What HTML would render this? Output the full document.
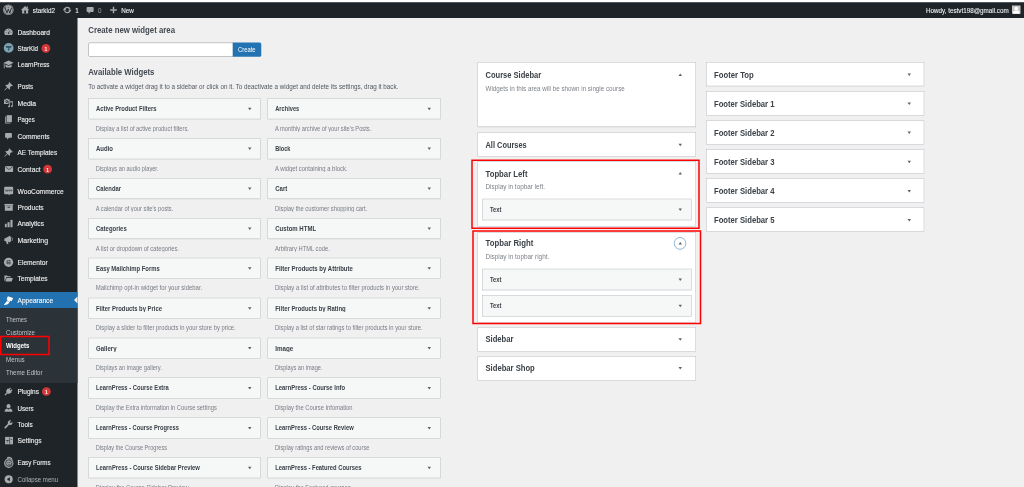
<!DOCTYPE html><html lang="en"><head><meta charset="utf-8"><title>Widgets</title><style>
html,body{margin:0;padding:0;width:1024px;height:487px;overflow:hidden;background:#f0f0f1}
#root{position:absolute;left:0;top:0;width:4096px;height:1948px;transform:scale(0.25);transform-origin:0 0;backface-visibility:hidden;overflow:hidden;font-family:"Liberation Sans", sans-serif;color:#1d2327}
#root *{box-sizing:border-box}
.a{position:absolute}
.t{position:absolute;white-space:nowrap;transform-origin:0 50%;line-height:40px;height:40px}
.m{font-size:29.6px;color:#f0f0f1;-webkit-text-stroke:0.48px #f0f0f1}
.sm{font-size:27.6px;color:#bfc3c7}
.ab{font-size:29.2px;color:#f0f0f1;-webkit-text-stroke:0.4px currentColor}
.h{font-size:34px;font-weight:bold;color:#424950}
.sh{font-size:33.2px;font-weight:bold;color:#3a4147}
.wt{font-size:26.4px;font-weight:bold;color:#3a4147}
.wd{font-size:25.4px;color:#787d84}
.d{font-size:27.6px;color:#7a7f86}
.n{font-size:28.8px;color:#50575e}
.wbox{position:absolute;background:rgba(246,247,247,.996);border:2.4px solid #bcbec3;box-shadow:0 2px 2px rgba(0,0,0,.04)}
.sbox{position:absolute;background:rgba(255,255,255,.996);border:2.4px solid #b9bbc0;box-shadow:0 2px 2px rgba(0,0,0,.04)}
.red{position:absolute;border:6.8px solid #ff0000}
.badge{position:absolute;background:rgba(214,54,56,.996);border-radius:50%;color:#fff;font-size:19.6px;text-align:center;font-weight:bold;overflow:hidden}
.ar{position:absolute;width:0;height:0;border-left:7.4px solid transparent;border-right:7.4px solid transparent}
.ard{border-top:10px solid #5c636a}
.aru{border-bottom:10px solid #5c636a}
svg{position:absolute;overflow:visible}
</style></head><body><div id="root">
<div class="a" style="left:0px;top:0px;width:4096px;height:8.8px;background:rgba(255,255,255,.996)"></div>
<div class="a" style="left:0px;top:8.8px;width:4096px;height:63.2px;background:rgba(29,35,39,.996)"></div>
<div class="a" style="left:0px;top:72px;width:310px;height:1876px;background:rgba(29,35,39,.996)"></div>
<div class="a" style="left:0px;top:1168px;width:310px;height:64px;background:rgba(34,113,177,.996)"></div>
<div class="a" style="left:0px;top:1232px;width:310px;height:300px;background:rgba(44,51,56,.996)"></div>
<div class="a" style="left:296.4px;top:1185.6px;width:0;height:0;border-top:14.8px solid transparent;border-bottom:14.8px solid transparent;border-right:14px solid #f0f0f1"></div>
<svg style="left:12px;top:18px;width:42.4px;height:42.4px" viewBox="0 0 20 20"><circle cx="10" cy="10" r="10" fill="#a7aaad"/><circle cx="10" cy="10" r="8.4" fill="none" stroke="#1d2327" stroke-width="0.7"/><polyline points="3.8,6.2 7.4,15.8 10,8.8 12.8,15.8 16.2,6.2" fill="none" stroke="#1d2327" stroke-width="1.7" stroke-linejoin="miter"/><line x1="2.8" y1="6" x2="5.6" y2="6" stroke="#1d2327" stroke-width="1"/><line x1="8.6" y1="6" x2="11.6" y2="6" stroke="#1d2327" stroke-width="1"/></svg>
<svg style="left:82px;top:21.2px;width:36.8px;height:36.8px" viewBox="0 0 20 20"><path fill="#a7aaad" d="M10 1.6 L19 10.2 H16.6 V18 H3.4 V10.2 H1 Z"/><rect x="13.6" y="2.6" width="2.4" height="4.4" fill="#a7aaad"/><path fill="#1d2327" d="M8.2 18 V12.6 a1.8 1.8 0 0 1 3.6 0 V18 Z"/><path d="M10 4.6 L16.6 11" stroke="#1d2327" stroke-width="0" fill="none"/></svg>
<svg style="left:249.6px;top:20.6px;width:37.6px;height:37.6px" viewBox="0 0 20 20"><circle cx="10" cy="10" r="5.6" fill="none" stroke="#a7aaad" stroke-width="2.6"/><rect x="0" y="8.8" width="20" height="2.4" fill="#1d2327" transform="rotate(0 10 10)"/><path fill="#a7aaad" d="M0.6 10.6 L4.6 5.4 L8.2 10.6 Z"/><path fill="#a7aaad" d="M19.4 9.4 L15.4 14.6 L11.8 9.4 Z"/></svg>
<svg style="left:343.2px;top:22.8px;width:35.2px;height:35.2px" viewBox="0 0 20 20"><path fill="#a7aaad" d="M4 3 H16 a2 2 0 0 1 2 2 V12 a2 2 0 0 1 -2 2 H10.5 L6.5 18.5 V14 H4 a2 2 0 0 1 -2 -2 V5 a2 2 0 0 1 2 -2 Z"/></svg>
<svg style="left:436.4px;top:21.6px;width:36px;height:36px" viewBox="0 0 20 20"><path fill="#a7aaad" d="M8.4 2.6 H11.6 V8.4 H17.4 V11.6 H11.6 V17.4 H8.4 V11.6 H2.6 V8.4 H8.4 Z"/></svg>
<div class="a" style="left:4048px;top:21.6px;width:34.4px;height:33.6px;background:#c8c8c8;overflow:hidden"><div class="a" style="left:10.4px;top:5.2px;width:13.6px;height:14.4px;border-radius:50%;background:#fff"></div><div class="a" style="left:3.6px;top:20px;width:27.2px;height:24px;border-radius:9.6px 9.6px 0 0;background:#fff"></div></div>
<span class="t ab" style="left:131.2px;top:20.8px;transform:scaleX(0.868);">starkid2</span>
<span class="t ab" style="left:300.8px;top:20.8px;transform:scaleX(0.86);">1</span>
<span class="t ab" style="left:392.4px;top:20.8px;transform:scaleX(0.86);color:#8c9196">0</span>
<span class="t ab" style="left:484.8px;top:20.8px;transform:scaleX(0.87);">New</span>
<span class="t ab" style="left:3704px;top:20.8px;transform:scaleX(0.861);">Howdy, testvt198@gmail.com</span>
<svg style="left:15.2px;top:108.4px;width:38.4px;height:38.4px" viewBox="0 0 20 20"><path fill="#a7aaad" d="M2.8 16.6 A8.6 8.6 0 1 1 17.2 16.6 Z"/><path d="M10 12.8 L13 7" stroke="#1d2327" stroke-width="1.3" fill="none"/><circle cx="10" cy="13.2" r="1.5" fill="#1d2327"/><circle cx="4.8" cy="11.4" r="0.8" fill="#1d2327"/><circle cx="6.4" cy="7" r="0.8" fill="#1d2327"/><circle cx="10" cy="5.2" r="0.8" fill="#1d2327"/><circle cx="15.2" cy="11.4" r="0.8" fill="#1d2327"/></svg>
<span class="t m" style="left:70.4px;top:107.6px;transform:scaleX(0.898);">Dashboard</span>
<svg style="left:14.8px;top:172.4px;width:39.2px;height:39.2px" viewBox="0 0 20 20"><circle cx="10" cy="10" r="10" fill="#7ca1b1"/><path fill="#2f434e" d="M3.8 6.2 H16.6 L14.2 9.6 H12 L10.6 15.2 H8.8 L9.2 9.6 H5.6 Z"/><path d="M5.4 7.8 H15 M8.6 11.4 H11.6" stroke="#7ca1b1" stroke-width="0.6"/></svg>
<span class="t m" style="left:70.4px;top:172.4px;transform:scaleX(0.849);">StarKid</span>
<svg style="left:14px;top:238px;width:40.8px;height:40.8px" viewBox="0 0 20 20"><path fill="#a7aaad" d="M10 2 L19.8 6.6 L10 11.4 L0.4 6.6 Z"/><path fill="#a7aaad" d="M4 9.6 L10 12.6 L16 9.6 V14 C13.6 16.4 6.4 16.4 4 14 Z"/><path fill="#a7aaad" d="M0.6 7 H2.1 V17.8 H0.6 Z"/></svg>
<span class="t m" style="left:70.4px;top:238.4px;transform:scaleX(0.843);">LearnPress</span>
<svg style="left:15.2px;top:326.4px;width:38.4px;height:38.4px" viewBox="0 0 20 20"><path fill="#a7aaad" d="M11.4 1 L19 8.6 L17.4 9.8 L15.8 9.2 L13 12 C13.6 14 13.2 15.6 12 17 L8.2 13.2 L2 19 L1 18 L6.8 11.8 L3 8 C4.4 6.8 6 6.4 8 7 L10.8 4.2 L10.2 2.6 Z"/></svg>
<span class="t m" style="left:70.4px;top:325.6px;transform:scaleX(0.843);">Posts</span>
<svg style="left:15.2px;top:392.8px;width:38.4px;height:38.4px" viewBox="0 0 20 20"><path fill="#a7aaad" d="M0.6 2.6 H3.8 L4.8 1.2 H8.6 L9.6 2.6 H12.6 V6.2 H10 V12 H0.6 Z"/><circle cx="6.4" cy="7" r="2.7" fill="#1d2327"/><circle cx="6.4" cy="7" r="1.4" fill="#a7aaad"/><path fill="#a7aaad" d="M11.6 6.4 H19 V16.4 a2.1 1.8 0 1 1 -1.5 -1.7 V8.8 H13.1 V17 a2.1 1.8 0 1 1 -1.5 -1.7 Z"/></svg>
<span class="t m" style="left:70.4px;top:392px;transform:scaleX(0.918);">Media</span>
<svg style="left:15.2px;top:458.4px;width:38.4px;height:38.4px" viewBox="0 0 20 20"><path fill="#a7aaad" d="M6 1.4 H17 V16 H6 Z"/><path fill="#a7aaad" d="M3 4 H5 V17 H14 V18.8 H3 Z"/></svg>
<span class="t m" style="left:70.4px;top:457.6px;transform:scaleX(0.82);">Pages</span>
<svg style="left:16.4px;top:526.8px;width:36px;height:36px" viewBox="0 0 20 20"><path fill="#a7aaad" d="M4.4 2.6 H15.6 a2 2 0 0 1 2 2 V11.6 a2 2 0 0 1 -2 2 H11 L7 18 V13.6 H4.4 a2 2 0 0 1 -2 -2 V4.6 a2 2 0 0 1 2 -2 Z"/></svg>
<span class="t m" style="left:70.4px;top:524px;transform:scaleX(0.9);">Comments</span>
<svg style="left:15.2px;top:591.2px;width:38.4px;height:38.4px" viewBox="0 0 20 20"><path fill="#a7aaad" d="M11.4 1 L19 8.6 L17.4 9.8 L15.8 9.2 L13 12 C13.6 14 13.2 15.6 12 17 L8.2 13.2 L2 19 L1 18 L6.8 11.8 L3 8 C4.4 6.8 6 6.4 8 7 L10.8 4.2 L10.2 2.6 Z"/></svg>
<span class="t m" style="left:70.4px;top:590.4px;transform:scaleX(0.872);">AE Templates</span>
<svg style="left:18.2px;top:657.6px;width:36px;height:36px" viewBox="0 0 20 20"><rect x="1" y="3.6" width="18" height="13" fill="#a7aaad"/><path d="M1.6 4.6 L10 11.4 L18.4 4.6" fill="none" stroke="#1d2327" stroke-width="1.4"/></svg>
<span class="t m" style="left:70.4px;top:655.6px;transform:scaleX(0.906);">Contact</span>
<svg style="left:14.8px;top:743.6px;width:39.2px;height:39.2px" viewBox="0 0 20 20"><path fill="#a7aaad" d="M3 1.4 H17 a2.2 2.2 0 0 1 2.2 2.2 V14.6 a2.2 2.2 0 0 1 -2.2 2.2 H12.4 L10.6 19.4 L9.8 16.8 H3 a2.2 2.2 0 0 1 -2.2 -2.2 V3.6 a2.2 2.2 0 0 1 2.2 -2.2 Z"/><path d="M3.6 7.4 L4.8 11 L6.2 8 L7.6 11 L8.6 7.4" fill="none" stroke="#1d2327" stroke-width="1"/><circle cx="11.4" cy="9.2" r="1.4" fill="none" stroke="#1d2327" stroke-width="1"/><circle cx="15.4" cy="9.2" r="1.4" fill="none" stroke="#1d2327" stroke-width="1"/></svg>
<span class="t m" style="left:70.4px;top:744px;transform:scaleX(0.901);">WooCommerce</span>
<svg style="left:16.4px;top:810.4px;width:38.4px;height:38.4px" viewBox="0 0 20 20"><rect x="1" y="3" width="18" height="3.8" fill="#a7aaad"/><rect x="1.8" y="7.4" width="16.4" height="9.8" fill="#a7aaad"/><rect x="7.2" y="9" width="5.6" height="1.7" fill="#1d2327"/></svg>
<span class="t m" style="left:70.4px;top:809.6px;transform:scaleX(0.897);">Products</span>
<svg style="left:15.2px;top:876px;width:38.4px;height:38.4px" viewBox="0 0 20 20"><rect x="2.4" y="10" width="3.8" height="7.2" fill="#a7aaad"/><rect x="7.8" y="6.6" width="4.4" height="10.6" fill="#a7aaad"/><rect x="13.8" y="1.8" width="4.6" height="15.4" fill="#a7aaad"/></svg>
<span class="t m" style="left:70.4px;top:875.2px;transform:scaleX(0.895);">Analytics</span>
<svg style="left:14px;top:940.4px;width:40.8px;height:40.8px" viewBox="0 0 20 20"><path fill="#a7aaad" d="M1.6 7.4 L12.6 1.6 C16 4.4 16 11.8 12.6 14.6 L8.6 12.6 L9.8 17.2 L6.6 18.2 L5 12.2 L1.6 11.6 Z"/><path fill="none" stroke="#a7aaad" stroke-width="1.3" d="M15.6 4.4 C18.4 6.4 18.4 10 15.8 12"/></svg>
<span class="t m" style="left:70.4px;top:940.8px;transform:scaleX(0.942);">Marketing</span>
<svg style="left:15.2px;top:1029.6px;width:38.4px;height:38.4px" viewBox="0 0 20 20"><circle cx="10" cy="10" r="9.6" fill="#a7aaad"/><rect x="6.2" y="6" width="1.8" height="8" fill="#1d2327"/><rect x="9.6" y="6" width="4.4" height="1.7" fill="#1d2327"/><rect x="9.6" y="9.15" width="4.4" height="1.7" fill="#1d2327"/><rect x="9.6" y="12.3" width="4.4" height="1.7" fill="#1d2327"/></svg>
<span class="t m" style="left:70.4px;top:1028.8px;transform:scaleX(0.895);">Elementor</span>
<svg style="left:15.2px;top:1094.8px;width:38.4px;height:38.4px" viewBox="0 0 20 20"><path fill="#a7aaad" d="M1.4 3.6 H7 L8.4 5.4 H14.6 V7.4 H5.2 L2.6 14.6 H1.4 Z"/><path fill="#a7aaad" d="M6 8.6 H19.2 L16.4 16 H3.2 Z"/></svg>
<span class="t m" style="left:70.4px;top:1094px;transform:scaleX(0.895);">Templates</span>
<svg style="left:14px;top:1180.8px;width:40.8px;height:40.8px" viewBox="0 0 20 20"><path fill="#fff" d="M8.6 1.8 L18.8 5.6 L16.2 12 L13 10.8 L12 13.2 L7 11.2 L8 8.8 L6 8 Z"/><path fill="#fff" d="M6.6 11.4 L11.8 13.6 C10.4 16.6 6.4 19.2 1 19 C1 17 3.6 16.4 6.6 11.4 Z"/></svg>
<span class="t m" style="left:70.4px;top:1181.2px;transform:scaleX(0.892);color:#fff">Appearance</span>
<svg style="left:15.2px;top:1546.8px;width:38.4px;height:38.4px" viewBox="0 0 20 20"><path fill="#a7aaad" d="M13.2 1.6 L15 3.4 L12.2 6.4 L13.8 8 L16.6 5 L18.4 6.8 L15.6 9.8 L16.8 11 L15.2 12.6 C12.8 15 10 15.4 7.8 14 L3.4 18.4 L1.6 16.6 L6 12.2 C4.6 10 5 7.2 7.4 4.8 L9 3.2 L10.4 4.6 Z"/></svg>
<span class="t m" style="left:70.4px;top:1546px;transform:scaleX(0.886);">Plugins</span>
<svg style="left:15.2px;top:1612.8px;width:38.4px;height:38.4px" viewBox="0 0 20 20"><circle cx="10" cy="6" r="4.2" fill="#a7aaad"/><path fill="#a7aaad" d="M1.8 17.6 C1.8 12.8 5.4 11.2 7.4 11.2 L10 13.4 L12.6 11.2 C14.6 11.2 18.2 12.8 18.2 17.6 Z"/></svg>
<span class="t m" style="left:70.4px;top:1612px;transform:scaleX(0.838);">Users</span>
<svg style="left:15.2px;top:1678px;width:38.4px;height:38.4px" viewBox="0 0 20 20"><path fill="#a7aaad" d="M17.8 4.6 L14.6 7.6 L12.4 5.4 L15.4 2.2 C13.4 1.4 11 1.8 9.6 3.4 C8.2 5 8 7 8.8 8.8 L1.8 15.6 C1 16.4 1 17.4 1.8 18.2 C2.6 19 3.6 19 4.4 18.2 L11.2 11.2 C13 12 15 11.8 16.6 10.4 C18.2 9 18.6 6.6 17.8 4.6 Z"/></svg>
<span class="t m" style="left:70.4px;top:1677.2px;transform:scaleX(0.88);">Tools</span>
<svg style="left:16.8px;top:1743.2px;width:38.4px;height:38.4px" viewBox="0 0 20 20"><rect x="1.8" y="2.4" width="16.4" height="15.4" fill="#a7aaad"/><rect x="10.8" y="3.6" width="1.3" height="13" fill="#1d2327"/><rect x="4" y="9.4" width="5.4" height="1.7" fill="#1d2327"/><rect x="6.2" y="9.4" width="1" height="6.4" fill="#1d2327" opacity="0.5"/><rect x="13.6" y="6.8" width="3" height="1.5" fill="#1d2327" opacity="0.8"/></svg>
<span class="t m" style="left:70.4px;top:1743.2px;transform:scaleX(0.898);">Settings</span>
<svg style="left:14px;top:1827.6px;width:42.4px;height:42.4px" viewBox="0 0 20 20"><ellipse cx="10" cy="11.6" rx="7.8" ry="8.2" fill="#a7aaad" opacity="0.35"/><ellipse cx="10" cy="11.6" rx="7.8" ry="8.2" fill="none" stroke="#a7aaad" stroke-width="1.9"/><path d="M8.6 4 C6.4 1.6 8.6 -0.6 12.8 0.8 C15.4 1.8 16.2 4.4 15.4 6.4" fill="none" stroke="#a7aaad" stroke-width="2"/><path fill="#a7aaad" opacity="0.9" d="M6 8.6 C7.4 6.4 12 6 13.8 8.4 C15.6 8.8 15.8 11.4 14.2 12 C14 15.8 9 17 6.6 14.8 C4.6 13.8 4.8 10.4 6 8.6 Z"/><circle cx="8.4" cy="10.6" r="1" fill="#1d2327"/><circle cx="11.6" cy="10.6" r="1" fill="#1d2327"/><path d="M7.8 13.4 C9 14.6 11 14.6 12.2 13.4" stroke="#1d2327" stroke-width="0.9" fill="none"/></svg>
<span class="t m" style="left:70.4px;top:1830.4px;transform:scaleX(0.839);">Easy Forms</span>
<svg style="left:15.6px;top:1898px;width:37.6px;height:37.6px" viewBox="0 0 20 20"><circle cx="10" cy="10" r="8.6" fill="#a7aaad"/><path fill="#1d2327" d="M12.4 5.6 V14.4 L6.2 10 Z"/></svg>
<span class="t m" style="left:70.4px;top:1896.8px;transform:scaleX(0.882);color:#b0b4b8;-webkit-text-stroke:0;font-size:27.6px">Collapse menu</span>
<div class="badge" style="left:165.8px;top:176.2px;width:34.8px;height:34.8px;line-height:40.8px">1</div>
<div class="badge" style="left:173.4px;top:659px;width:34.8px;height:34.8px;line-height:40.8px">1</div>
<div class="badge" style="left:167.8px;top:1548.6px;width:34.8px;height:34.8px;line-height:40.8px">1</div>
<span class="t sm" style="left:24px;top:1256.8px;transform:scaleX(0.838);">Themes</span>
<span class="t sm" style="left:24px;top:1310.4px;transform:scaleX(0.89);">Customize</span>
<span class="t sm" style="left:24px;top:1364px;transform:scaleX(0.874);color:#fff;font-weight:bold">Widgets</span>
<span class="t sm" style="left:24px;top:1418px;transform:scaleX(0.905);">Menus</span>
<span class="t sm" style="left:24px;top:1471.6px;transform:scaleX(0.881);">Theme Editor</span>
<div class="red" style="left:-0.4px;top:1343.4px;width:199.4px;height:77.2px;"></div>
<span class="t h" style="left:352.8px;top:100.6px;transform:scaleX(0.918);">Create new widget area</span>
<div class="a" style="left:353px;top:170.4px;width:581px;height:56.4px;background:rgba(255,255,255,.996);border:2px solid #8c8f94;border-radius:7.2px 0 0 7.2px"></div>
<div class="a" style="left:931px;top:170.4px;width:114px;height:56.4px;background:rgba(34,113,177,.996);border-radius:0 6.4px 6.4px 0"></div>
<span class="t ab" style="left:952px;top:179.2px;transform:scaleX(0.85);color:#fff;-webkit-text-stroke:0;font-size:27.6px">Create</span>
<span class="t h" style="left:352.8px;top:268.4px;transform:scaleX(0.915);">Available Widgets</span>
<span class="t n" style="left:352.8px;top:325.2px;transform:scaleX(0.874);">To activate a widget drag it to a sidebar or click on it. To deactivate a widget and delete its settings, drag it back.</span>
<div class="wbox" style="left:353.6px;top:393px;width:688px;height:84px;"></div>
<div class="wbox" style="left:1070px;top:393px;width:691.6px;height:84px;"></div>
<span class="t wt" style="left:384px;top:415.2px;transform:scaleX(0.887);">Active Product Filters</span>
<div class="ar ard" style="left:992px;top:430.8px"></div>
<span class="t wt" style="left:1100.8px;top:415.2px;transform:scaleX(0.861);">Archives</span>
<div class="ar ard" style="left:1710px;top:430.8px"></div>
<span class="t wd" style="left:383.2px;top:494px;transform:scaleX(0.908);">Display a list of active product filters.</span>
<span class="t wd" style="left:1100px;top:494px;transform:scaleX(0.902);">A monthly archive of your site's Posts.</span>
<div class="wbox" style="left:353.6px;top:552.6px;width:688px;height:84px;"></div>
<div class="wbox" style="left:1070px;top:552.6px;width:691.6px;height:84px;"></div>
<span class="t wt" style="left:384px;top:574.8px;transform:scaleX(0.909);">Audio</span>
<div class="ar ard" style="left:992px;top:590.4px"></div>
<span class="t wt" style="left:1100.8px;top:574.8px;transform:scaleX(0.848);">Block</span>
<div class="ar ard" style="left:1710px;top:590.4px"></div>
<span class="t wd" style="left:383.2px;top:653.6px;transform:scaleX(0.889);">Displays an audio player.</span>
<span class="t wd" style="left:1100px;top:653.6px;transform:scaleX(0.925);">A widget containing a block.</span>
<div class="wbox" style="left:353.6px;top:712.2px;width:688px;height:84px;"></div>
<div class="wbox" style="left:1070px;top:712.2px;width:691.6px;height:84px;"></div>
<span class="t wt" style="left:384px;top:734.4px;transform:scaleX(0.885);">Calendar</span>
<div class="ar ard" style="left:992px;top:750px"></div>
<span class="t wt" style="left:1100.8px;top:734.4px;transform:scaleX(0.909);">Cart</span>
<div class="ar ard" style="left:1710px;top:750px"></div>
<span class="t wd" style="left:383.2px;top:813.2px;transform:scaleX(0.903);">A calendar of your site's posts.</span>
<span class="t wd" style="left:1100px;top:813.2px;transform:scaleX(0.914);">Display the customer shopping cart.</span>
<div class="wbox" style="left:353.6px;top:871.8px;width:688px;height:84px;"></div>
<div class="wbox" style="left:1070px;top:871.8px;width:691.6px;height:84px;"></div>
<span class="t wt" style="left:384px;top:894px;transform:scaleX(0.901);">Categories</span>
<div class="ar ard" style="left:992px;top:909.6px"></div>
<span class="t wt" style="left:1100.8px;top:894px;transform:scaleX(0.914);">Custom HTML</span>
<div class="ar ard" style="left:1710px;top:909.6px"></div>
<span class="t wd" style="left:383.2px;top:972.8px;transform:scaleX(0.921);">A list or dropdown of categories.</span>
<span class="t wd" style="left:1100px;top:972.8px;transform:scaleX(0.911);">Arbitrary HTML code.</span>
<div class="wbox" style="left:353.6px;top:1031.4px;width:688px;height:84px;"></div>
<div class="wbox" style="left:1070px;top:1031.4px;width:691.6px;height:84px;"></div>
<span class="t wt" style="left:384px;top:1053.6px;transform:scaleX(0.891);">Easy Mailchimp Forms</span>
<div class="ar ard" style="left:992px;top:1069.2px"></div>
<span class="t wt" style="left:1100.8px;top:1053.6px;transform:scaleX(0.911);">Filter Products by Attribute</span>
<div class="ar ard" style="left:1710px;top:1069.2px"></div>
<span class="t wd" style="left:383.2px;top:1132.4px;transform:scaleX(0.937);">Mailchimp opt-in widget for your sidebar.</span>
<span class="t wd" style="left:1100px;top:1132.4px;transform:scaleX(0.928);">Display a list of attributes to filter products in your store.</span>
<div class="wbox" style="left:353.6px;top:1191px;width:688px;height:84px;"></div>
<div class="wbox" style="left:1070px;top:1191px;width:691.6px;height:84px;"></div>
<span class="t wt" style="left:384px;top:1213.2px;transform:scaleX(0.891);">Filter Products by Price</span>
<div class="ar ard" style="left:992px;top:1228.8px"></div>
<span class="t wt" style="left:1100.8px;top:1213.2px;transform:scaleX(0.898);">Filter Products by Rating</span>
<div class="ar ard" style="left:1710px;top:1228.8px"></div>
<span class="t wd" style="left:383.2px;top:1292px;transform:scaleX(0.918);">Display a slider to filter products in your store by price.</span>
<span class="t wd" style="left:1100px;top:1292px;transform:scaleX(0.916);">Display a list of star ratings to filter products in your store.</span>
<div class="wbox" style="left:353.6px;top:1350.6px;width:688px;height:84px;"></div>
<div class="wbox" style="left:1070px;top:1350.6px;width:691.6px;height:84px;"></div>
<span class="t wt" style="left:384px;top:1372.8px;transform:scaleX(0.92);">Gallery</span>
<div class="ar ard" style="left:992px;top:1388.4px"></div>
<span class="t wt" style="left:1100.8px;top:1372.8px;transform:scaleX(0.944);">Image</span>
<div class="ar ard" style="left:1710px;top:1388.4px"></div>
<span class="t wd" style="left:383.2px;top:1451.6px;transform:scaleX(0.896);">Displays an image gallery.</span>
<span class="t wd" style="left:1100px;top:1451.6px;transform:scaleX(0.887);">Displays an image.</span>
<div class="wbox" style="left:353.6px;top:1510.2px;width:688px;height:84px;"></div>
<div class="wbox" style="left:1070px;top:1510.2px;width:691.6px;height:84px;"></div>
<span class="t wt" style="left:384px;top:1532.4px;transform:scaleX(0.878);">LearnPress - Course Extra</span>
<div class="ar ard" style="left:992px;top:1548px"></div>
<span class="t wt" style="left:1100.8px;top:1532.4px;transform:scaleX(0.889);">LearnPress - Course Info</span>
<div class="ar ard" style="left:1710px;top:1548px"></div>
<span class="t wd" style="left:383.2px;top:1611.2px;transform:scaleX(0.905);">Display the Extra information in Course settings</span>
<span class="t wd" style="left:1100px;top:1611.2px;transform:scaleX(0.912);">Display the Course Infomation</span>
<div class="wbox" style="left:353.6px;top:1669.8px;width:688px;height:84px;"></div>
<div class="wbox" style="left:1070px;top:1669.8px;width:691.6px;height:84px;"></div>
<span class="t wt" style="left:384px;top:1692px;transform:scaleX(0.873);">LearnPress - Course Progress</span>
<div class="ar ard" style="left:992px;top:1707.6px"></div>
<span class="t wt" style="left:1100.8px;top:1692px;transform:scaleX(0.88);">LearnPress - Course Review</span>
<div class="ar ard" style="left:1710px;top:1707.6px"></div>
<span class="t wd" style="left:383.2px;top:1770.8px;transform:scaleX(0.882);">Display the Course Progress</span>
<span class="t wd" style="left:1100px;top:1770.8px;transform:scaleX(0.898);">Display ratings and reviews of course</span>
<div class="wbox" style="left:353.6px;top:1829.4px;width:688px;height:84px;"></div>
<div class="wbox" style="left:1070px;top:1829.4px;width:691.6px;height:84px;"></div>
<span class="t wt" style="left:384px;top:1851.6px;transform:scaleX(0.885);">LearnPress - Course Sidebar Preview</span>
<div class="ar ard" style="left:992px;top:1867.2px"></div>
<span class="t wt" style="left:1100.8px;top:1851.6px;transform:scaleX(0.881);">LearnPress - Featured Courses</span>
<div class="ar ard" style="left:1710px;top:1867.2px"></div>
<span class="t wd" style="left:383.2px;top:1930.4px;transform:scaleX(0.915);">Display the Course Sidebar Preview</span>
<span class="t wd" style="left:1100px;top:1930.4px;transform:scaleX(0.915);">Display the Featured courses</span>
<div class="sbox" style="left:1910px;top:248px;width:873.6px;height:259.6px;"></div>
<span class="t sh" style="left:1941.6px;top:278.8px;transform:scaleX(0.909);">Course Sidebar</span>
<div class="ar aru" style="left:2713.6px;top:293.6px"></div>
<span class="t d" style="left:1941.6px;top:333.6px;transform:scaleX(0.908);">Widgets in this area will be shown in single course</span>
<div class="sbox" style="left:1910px;top:528.8px;width:873.6px;height:96.8px;"></div>
<span class="t sh" style="left:1941.6px;top:561.2px;transform:scaleX(0.894);">All Courses</span>
<div class="ar ard" style="left:2713.6px;top:575.2px"></div>
<div class="sbox" style="left:1910px;top:644.8px;width:873.6px;height:262.4px;"></div>
<span class="t sh" style="left:1941.6px;top:674.8px;transform:scaleX(0.933);">Topbar Left</span>
<div class="ar aru" style="left:2713.6px;top:688.4px"></div>
<span class="t d" style="left:1941.6px;top:728.4px;transform:scaleX(0.923);">Display in topbar left.</span>
<div class="wbox" style="left:1928px;top:795px;width:838px;height:85.8px;"></div>
<span class="t wt" style="left:1960px;top:818.8px;transform:scaleX(0.864);">Text</span>
<div class="ar ard" style="left:2713.6px;top:834.4px"></div>
<div class="red" style="left:1885.2px;top:638px;width:913.6px;height:278.4px;"></div>
<div class="sbox" style="left:1910px;top:928px;width:873.6px;height:362.4px;"></div>
<span class="t sh" style="left:1941.6px;top:953.6px;transform:scaleX(0.936);">Topbar Right</span>
<div class="a" style="left:2695.6px;top:948.8px;width:48.8px;height:48.8px;border-radius:50%;border:2.8px solid #2271b1;background:rgba(255,255,255,.996)"></div>
<div class="ar aru" style="left:2713.6px;top:968px"></div>
<span class="t d" style="left:1941.6px;top:1008.4px;transform:scaleX(0.929);">Display in topbar right.</span>
<div class="wbox" style="left:1928px;top:1075px;width:838px;height:85.8px;"></div>
<span class="t wt" style="left:1960px;top:1098.8px;transform:scaleX(0.864);">Text</span>
<div class="ar ard" style="left:2713.6px;top:1114.4px"></div>
<div class="wbox" style="left:1928px;top:1180px;width:838px;height:85.6px;"></div>
<span class="t wt" style="left:1960px;top:1203.8px;transform:scaleX(0.864);">Text</span>
<div class="ar ard" style="left:2713.6px;top:1219.4px"></div>
<div class="red" style="left:1889.2px;top:921.2px;width:915.6px;height:375.6px;"></div>
<div class="sbox" style="left:1910px;top:1308px;width:873.6px;height:98.8px;"></div>
<span class="t sh" style="left:1941.6px;top:1338.4px;transform:scaleX(0.92);">Sidebar</span>
<div class="ar ard" style="left:2713.6px;top:1353.2px"></div>
<div class="sbox" style="left:1910px;top:1424.8px;width:873.6px;height:96.8px;"></div>
<span class="t sh" style="left:1941.6px;top:1453.6px;transform:scaleX(0.921);">Sidebar Shop</span>
<div class="ar ard" style="left:2713.6px;top:1468.4px"></div>
<div class="sbox" style="left:2825px;top:248px;width:872px;height:96.6px;"></div>
<span class="t sh" style="left:2856px;top:278.8px;transform:scaleX(0.93);">Footer Top</span>
<div class="ar ard" style="left:3629.6px;top:294px"></div>
<div class="sbox" style="left:2825px;top:365px;width:872px;height:96.6px;"></div>
<span class="t sh" style="left:2856px;top:394.8px;transform:scaleX(0.924);">Footer Sidebar 1</span>
<div class="ar ard" style="left:3629.6px;top:410px"></div>
<div class="sbox" style="left:2825px;top:481.6px;width:872px;height:96.4px;"></div>
<span class="t sh" style="left:2856px;top:510.8px;transform:scaleX(0.924);">Footer Sidebar 2</span>
<div class="ar ard" style="left:3629.6px;top:526px"></div>
<div class="sbox" style="left:2825px;top:597.2px;width:872px;height:96.8px;"></div>
<span class="t sh" style="left:2856px;top:627.6px;transform:scaleX(0.924);">Footer Sidebar 3</span>
<div class="ar ard" style="left:3629.6px;top:642.8px"></div>
<div class="sbox" style="left:2825px;top:713.2px;width:872px;height:96.8px;"></div>
<span class="t sh" style="left:2856px;top:744.4px;transform:scaleX(0.924);">Footer Sidebar 4</span>
<div class="ar ard" style="left:3629.6px;top:759.6px"></div>
<div class="sbox" style="left:2825px;top:829.6px;width:872px;height:96.4px;"></div>
<span class="t sh" style="left:2856px;top:860.8px;transform:scaleX(0.924);">Footer Sidebar 5</span>
<div class="ar ard" style="left:3629.6px;top:876px"></div>
</div></body></html>
